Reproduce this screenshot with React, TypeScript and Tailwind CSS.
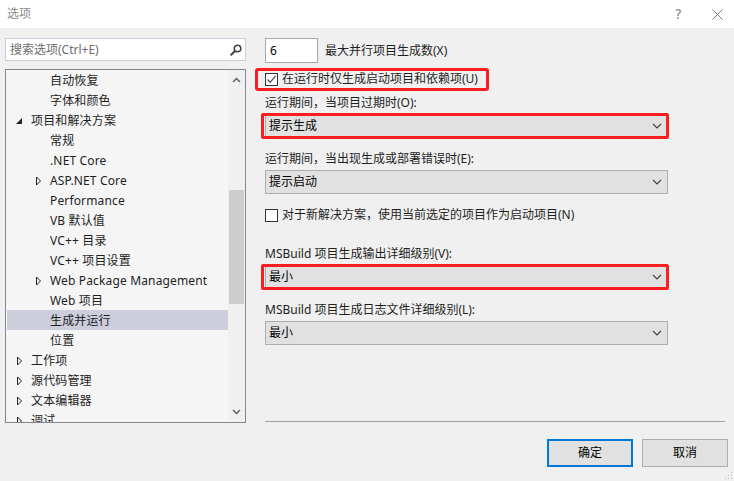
import React from "react";

type Item = { t: string; l: 1 | 2; a?: "open" | "closed"; sel?: boolean };

const items: Item[] = [
  { t: "自动恢复", l: 2 },
  { t: "字体和颜色", l: 2 },
  { t: "项目和解决方案", l: 1, a: "open" },
  { t: "常规", l: 2 },
  { t: ".NET Core", l: 2 },
  { t: "ASP.NET Core", l: 2, a: "closed" },
  { t: "Performance", l: 2 },
  { t: "VB 默认值", l: 2 },
  { t: "VC++ 目录", l: 2 },
  { t: "VC++ 项目设置", l: 2 },
  { t: "Web Package Management", l: 2, a: "closed" },
  { t: "Web 项目", l: 2 },
  { t: "生成并运行", l: 2, sel: true },
  { t: "位置", l: 2 },
  { t: "工作项", l: 1, a: "closed" },
  { t: "源代码管理", l: 1, a: "closed" },
  { t: "文本编辑器", l: 1, a: "closed" },
  { t: "调试", l: 1, a: "closed" },
];

function Chevron() {
  return (
    <svg width="10" height="6" viewBox="0 0 10 6" className="shrink-0">
      <path d="M1 1 L5 5 L9 1" fill="none" stroke="#404040" strokeWidth="1.1" />
    </svg>
  );
}

function Dropdown({ value, red }: { value: string; red?: boolean }) {
  return (
    <div className="relative mt-[3px] w-[403px] h-[24px]">
      <div className="w-full h-full bg-[#e1e1e1] border border-[#adadad] flex items-center justify-between pl-[3px] pr-[5px] text-[12px] text-black">
        <span>{value}</span>
        <Chevron />
      </div>
      {red && (
        <div className="absolute left-[-4px] top-[-1px] w-[408px] h-[26px] border-[3px] border-[#fa1e1e] rounded-[2px]" />
      )}
    </div>
  );
}

function Label({ children, mt }: { children: React.ReactNode; mt: string }) {
  return (
    <div className={`${mt} h-[16px] leading-[16px] text-[12px] text-[#1e1e1e] whitespace-nowrap`}>{children}</div>
  );
}

function Checkbox({ checked }: { checked?: boolean }) {
  return (
    <div className="w-[13px] h-[13px] border border-[#333333] bg-white flex items-center justify-center shrink-0">
      {checked && (
        <svg width="11" height="11" viewBox="0 0 11 11">
          <path d="M1.5 5.5 L4.2 8.3 L9.5 2" fill="none" stroke="#555555" strokeWidth="1.3" />
        </svg>
      )}
    </div>
  );
}

export default function App() {
  return (
    <div className="w-[734px] h-[481px] bg-[#f0f0f0] flex flex-col overflow-hidden relative font-['Noto_Sans','Noto_Sans_CJK_SC',sans-serif] text-[#1e1e1e]">
      {/* Title bar */}
      <div className="h-[28px] bg-white flex items-center shrink-0">
        <span className="ml-[7px] text-[12px] text-[#8a8a8a]">选项</span>
        <span className="ml-auto mr-[30px] text-[14px] text-[#8a8a8a] font-['DejaVu_Sans',sans-serif]">?</span>
        <svg width="11" height="11" viewBox="0 0 11 11" className="mr-[11px]">
          <path d="M0.5 0.5 L10.5 10.5 M10.5 0.5 L0.5 10.5" stroke="#7a7a7a" strokeWidth="1" />
        </svg>
      </div>

      <div className="flex flex-1">
        {/* Left column */}
        <div className="w-[246px] pl-[5px] flex flex-col">
          <div className="mt-[10px] h-[23px] w-[241px] bg-white border border-[#cccedb] flex items-center pl-[4px] pr-[3px]">
            <span className="text-[12px] text-[#6d6d6d]">搜索选项(Ctrl+E)</span>
            <svg width="12" height="12" viewBox="0 0 12 12" className="ml-auto">
              <circle cx="7.5" cy="4.5" r="3.3" fill="none" stroke="#444" strokeWidth="1.6" />
              <path d="M5.2 6.8 L1.2 10.8" stroke="#444" strokeWidth="2" strokeLinecap="round" />
            </svg>
          </div>
          <div className="mt-[8px] w-[241px] h-[354px] border border-[#828790] bg-[#f5f5f5] flex overflow-hidden">
            <div className="w-[222px] flex flex-col overflow-hidden">
              {items.map((it, i) => (
                <div
                  key={i}
                  className={`relative shrink-0 h-[20px] ml-[1px] w-[221px] flex items-center ${it.sel ? "bg-[#cccedb]" : ""}`}
                >
                  {it.a === "closed" && (
                    <svg
                      width="6"
                      height="10"
                      viewBox="0 0 6 10"
                      className={`absolute top-[6px] ${it.l === 1 ? "left-[10px]" : "left-[29px]"}`}
                    >
                      <path d="M0.5 1 L4.5 5 L0.5 9 Z" fill="none" stroke="#1e1e1e" strokeWidth="1" />
                    </svg>
                  )}
                  {it.a === "open" && (
                    <svg width="7" height="7" viewBox="0 0 7 7" className="absolute top-[8px] left-[9px]">
                      <path d="M6 0 L6 6 L0 6 Z" fill="#262626" />
                    </svg>
                  )}
                  <span
                    className={`text-[12px] whitespace-nowrap text-[#1e1e1e] tracking-[0.15px] translate-y-[1px] ${it.l === 1 ? "pl-[24px]" : "pl-[43px]"}`}
                  >
                    {it.t}
                  </span>
                </div>
              ))}
            </div>
            <div className="w-[17px] bg-[#f0f0f0] flex flex-col items-center">
              <svg width="9" height="6" viewBox="0 0 9 6" className="mt-[7px]">
                <path d="M1 5 L4.5 1.5 L8 5" fill="none" stroke="#606060" strokeWidth="1.5" />
              </svg>
              <div className="mt-[107px] w-[15px] h-[114px] bg-[#cdcdcd]" />
              <svg width="9" height="6" viewBox="0 0 9 6" className="mt-auto mb-[7px]">
                <path d="M1 1 L4.5 4.5 L8 1" fill="none" stroke="#606060" strokeWidth="1.5" />
              </svg>
            </div>
          </div>
        </div>

        {/* Right column */}
        <div className="flex-1 pl-[19px] pr-[9px] flex flex-col">
          <div className="mt-[10px] h-[25px] flex items-center">
            <div className="w-[53px] h-[25px] bg-white border border-[#a9a9a9] flex items-center pl-[4px] text-[12px] text-black">
              6
            </div>
            <span className="ml-[7px] text-[12px] text-[#1e1e1e]">最大并行项目生成数(X)</span>
          </div>

          <div className="relative mt-[6px] h-[20px] flex items-center">
            <Checkbox checked />
            <span className="ml-[4px] text-[12px] text-[#1e1e1e] whitespace-nowrap">在运行时仅生成启动项目和依赖项(U)</span>
            <div className="absolute left-[-10px] top-[-1px] w-[234px] h-[23px] border-[3px] border-[#fa1e1e] rounded-[3px]" />
          </div>

          <Label mt="mt-[6px]">运行期间，当项目过期时(O):</Label>
          <Dropdown value="提示生成" red />

          <Label mt="mt-[13px]">运行期间，当出现生成或部署错误时(E):</Label>
          <Dropdown value="提示启动" />

          <div className="mt-[11px] h-[20px] flex items-center">
            <Checkbox />
            <span className="ml-[4px] text-[12px] text-[#1e1e1e] whitespace-nowrap">
              对于新解决方案，使用当前选定的项目作为启动项目(N)
            </span>
          </div>

          <Label mt="mt-[21px]">MSBuild 项目生成输出详细级别(V):</Label>
          <Dropdown value="最小" red />

          <Label mt="mt-[13px]">MSBuild 项目生成日志文件详细级别(L):</Label>
          <Dropdown value="最小" />

          <div className="mt-[76px] h-px w-[460px] bg-[#a0a0a0]" />

          <div className="mt-[17px] flex justify-end gap-[9px] mr-[-3px]">
            <div className="w-[86px] h-[28px] border-2 border-[#0078d7] bg-[#e1e1e1] flex items-center justify-center text-[12px] text-black">
              确定
            </div>
            <div className="w-[86px] h-[28px] border border-[#adadad] bg-[#e1e1e1] flex items-center justify-center text-[12px] text-black">
              取消
            </div>
          </div>
        </div>
      </div>

      {/* resize grip */}
      <svg width="8" height="8" viewBox="0 0 8 8" className="absolute right-[1px] bottom-[1px]">
        <rect x="6" y="0" width="1" height="1" fill="#bdbdbd" />
        <rect x="3" y="3" width="1" height="1" fill="#bdbdbd" />
        <rect x="6" y="3" width="1" height="1" fill="#bdbdbd" />
        <rect x="0" y="6" width="1" height="1" fill="#bdbdbd" />
        <rect x="3" y="6" width="1" height="1" fill="#bdbdbd" />
        <rect x="6" y="6" width="1" height="1" fill="#bdbdbd" />
      </svg>
    </div>
  );
}
